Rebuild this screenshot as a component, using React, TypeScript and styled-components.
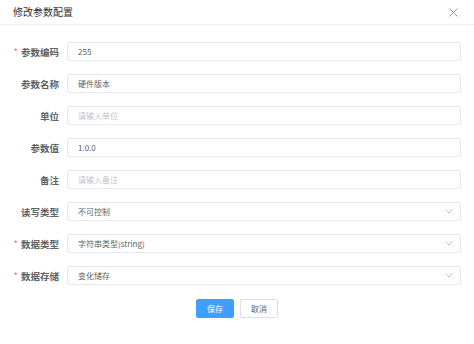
import React from 'react';
import styled, { createGlobalStyle } from 'styled-components';

const GlobalStyle = createGlobalStyle`
  html, body {
    margin: 0;
    padding: 0;
    background: #fff;
  }
  body {
    font-family: "Noto Sans CJK SC", "Noto Sans", sans-serif;
  }
`;

const Dialog = styled.div`
  width: 474px;
  height: 344px;
  background: #fff;
  box-sizing: border-box;
`;

const Header = styled.div`
  height: 25px;
  box-sizing: border-box;
  border-bottom: 1px solid #ebeef5;
  display: flex;
  align-items: center;
  justify-content: space-between;
  padding: 0 16px 0 13px;
`;

const Title = styled.span`
  font-size: 10px;
  color: #303133;
  line-height: 1;
`;

const Close = styled.svg`
  width: 9px;
  height: 9px;
  display: block;
`;

const Form = styled.div`
  padding: 17px 13px 0 0;
  display: flex;
  flex-direction: column;
  gap: 13px;
`;

const Row = styled.div`
  display: flex;
  align-items: center;
  height: 19px;
`;

const Label = styled.label`
  width: 67px;
  box-sizing: border-box;
  padding-right: 8px;
  text-align: right;
  font-size: 9.5px;
  font-weight: 700;
  color: #606266;
  white-space: nowrap;
`;

const Star = styled.span`
  color: #f56c6c;
  font-weight: 400;
  margin-right: 3px;
`;

const Field = styled.div<{ $placeholder?: boolean }>`
  flex: 1;
  height: 19px;
  box-sizing: border-box;
  border: 1px solid #e4e7ed;
  border-radius: 2px;
  display: flex;
  align-items: center;
  justify-content: space-between;
  padding: 0 7px 0 10px;
  font-size: 8px;
  color: ${({ $placeholder }) => ($placeholder ? '#c0c4cc' : '#606266')};
`;

const Chevron = styled.svg`
  width: 8px;
  height: 5px;
  display: block;
`;

const Footer = styled.div`
  display: flex;
  justify-content: center;
  gap: 6px;
  padding-top: 14px;
`;

const Button = styled.button<{ $primary?: boolean }>`
  width: 38px;
  height: 19px;
  box-sizing: border-box;
  padding: 0;
  border-radius: 2px;
  font-family: inherit;
  font-size: 8px;
  border: 1px solid ${({ $primary }) => ($primary ? '#409eff' : '#dcdfe6')};
  background: ${({ $primary }) => ($primary ? '#409eff' : '#fff')};
  color: ${({ $primary }) => ($primary ? '#fff' : '#606266')};
`;

type Item = {
  label: string;
  value: string;
  required?: boolean;
  placeholder?: boolean;
  select?: boolean;
};

const items: Item[] = [
  { label: '参数编码', value: '255', required: true },
  { label: '参数名称', value: '硬件版本' },
  { label: '单位', value: '请输入单位', placeholder: true },
  { label: '参数值', value: '1.0.0' },
  { label: '备注', value: '请输入备注', placeholder: true },
  { label: '读写类型', value: '不可控制', select: true },
  { label: '数据类型', value: '字符串类型(string)', required: true, select: true },
  { label: '数据存储', value: '变化储存', required: true, select: true },
];

const App = () => (
  <>
    <GlobalStyle />
    <Dialog>
      <Header>
        <Title>修改参数配置</Title>
        <Close viewBox="0 0 9 9">
          <path d="M0.5 0.5 L8.5 8.5 M8.5 0.5 L0.5 8.5" stroke="#909399" strokeWidth="1" fill="none" />
        </Close>
      </Header>
      <Form>
        {items.map((it) => (
          <Row key={it.label}>
            <Label>
              {it.required ? <Star>*</Star> : null}
              {it.label}
            </Label>
            <Field $placeholder={it.placeholder}>
              <span>{it.value}</span>
              {it.select ? (
                <Chevron viewBox="0 0 8 5">
                  <path d="M0.5 0.5 L4 4 L7.5 0.5" stroke="#c0c4cc" strokeWidth="1" fill="none" />
                </Chevron>
              ) : null}
            </Field>
          </Row>
        ))}
      </Form>
      <Footer>
        <Button $primary>保存</Button>
        <Button>取消</Button>
      </Footer>
    </Dialog>
  </>
);

export default App;
